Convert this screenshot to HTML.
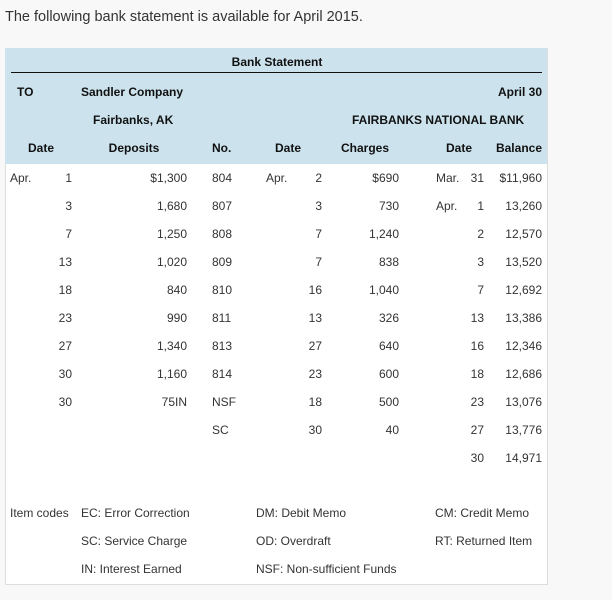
<!DOCTYPE html>
<html><head><meta charset="utf-8"><style>
html,body{margin:0;padding:0;background:#f8f8f8;width:612px;height:600px;overflow:hidden;font-family:"Liberation Sans",sans-serif;color:#333;}
.t{position:absolute;font-size:12px;line-height:14px;white-space:nowrap;}
.b{font-weight:bold;color:#111;}
.c{transform:translateX(-50%);}
#box{position:absolute;left:5px;top:48px;width:541px;height:535px;background:#fff;border:1px solid #ddd;}
#hd{position:absolute;left:5px;top:48px;width:542px;height:116px;background:#cce3ee;}
#ln{position:absolute;left:11px;top:72px;width:531px;height:1px;background:#111;}
</style></head><body>
<div class="t" style="left:5px;top:8px;font-size:14.5px;line-height:18px;color:#333">The following bank statement is available for April 2015.</div>
<div id="box"></div><div id="hd"></div><div id="ln"></div>
<div class="t b c" style="left:277px;top:55px">Bank Statement</div>
<div class="t b" style="left:17px;top:85px">TO</div>
<div class="t b" style="left:81px;top:85px">Sandler Company</div>
<div class="t b" style="right:70px;top:85px">April 30</div>
<div class="t b" style="left:93px;top:113px">Fairbanks, AK</div>
<div class="t b" style="left:352px;top:113px">FAIRBANKS NATIONAL BANK</div>
<div class="t b c" style="left:41px;top:141px">Date</div>
<div class="t b c" style="left:134px;top:141px">Deposits</div>
<div class="t b" style="left:212px;top:141px">No.</div>
<div class="t b c" style="left:288px;top:141px">Date</div>
<div class="t b c" style="left:365px;top:141px">Charges</div>
<div class="t b" style="left:446px;top:141px">Date</div>
<div class="t b" style="right:70px;top:141px">Balance</div>

<div class="t" style="left:10px;top:171px">Apr.</div>
<div class="t" style="left:266px;top:171px">Apr.</div>
<div class="t" style="left:436px;top:171px">Mar.</div>
<div class="t" style="left:436px;top:199px">Apr.</div>

<div class="t" style="right:540px;top:164px;line-height:28px;text-align:right">1<br>3<br>7<br>13<br>18<br>23<br>27<br>30<br>30</div>
<div class="t" style="right:425px;top:164px;line-height:28px;text-align:right">$1,300<br>1,680<br>1,250<br>1,020<br>840<br>990<br>1,340<br>1,160<br>75IN</div>
<div class="t" style="left:212px;top:164px;line-height:28px">804<br>807<br>808<br>809<br>810<br>811<br>813<br>814<br>NSF<br>SC</div>
<div class="t" style="right:290px;top:164px;line-height:28px;text-align:right">2<br>3<br>7<br>7<br>16<br>13<br>27<br>23<br>18<br>30</div>
<div class="t" style="right:213px;top:164px;line-height:28px;text-align:right">$690<br>730<br>1,240<br>838<br>1,040<br>326<br>640<br>600<br>500<br>40</div>
<div class="t" style="right:128px;top:164px;line-height:28px;text-align:right">31<br>1<br>2<br>3<br>7<br>13<br>16<br>18<br>23<br>27<br>30</div>
<div class="t" style="right:70px;top:164px;line-height:28px;text-align:right">$11,960<br>13,260<br>12,570<br>13,520<br>12,692<br>13,386<br>12,346<br>12,686<br>13,076<br>13,776<br>14,971</div>

<div class="t" style="left:10px;top:506px">Item codes</div>
<div class="t" style="left:81px;top:499px;line-height:28px">EC: Error Correction<br>SC: Service Charge<br>IN: Interest Earned</div>
<div class="t" style="left:256px;top:499px;line-height:28px">DM: Debit Memo<br>OD: Overdraft<br>NSF: Non-sufficient Funds</div>
<div class="t" style="left:435px;top:499px;line-height:28px">CM: Credit Memo<br>RT: Returned Item</div>
</body></html>
